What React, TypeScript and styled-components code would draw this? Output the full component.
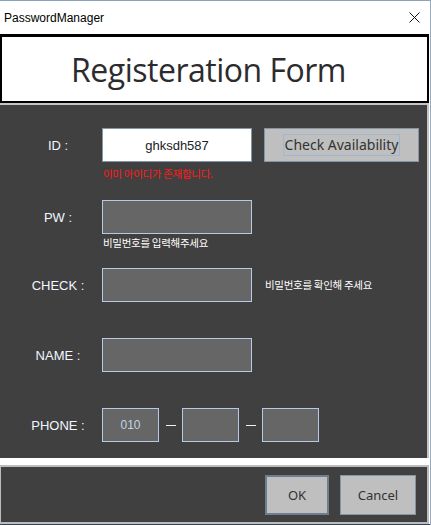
import React from 'react';
import styled, { createGlobalStyle } from 'styled-components';

const GlobalStyle = createGlobalStyle`
  html, body {
    margin: 0;
    padding: 0;
    background: #ffffff;
  }
  * {
    box-sizing: border-box;
  }
`;

const Window = styled.div`
  width: 431px;
  height: 525px;
  display: flex;
  flex-direction: column;
  background: #ffffff;
  border-top: 1px solid #8da3bb;
  border-right: 1px solid #9aaabb;
  overflow: hidden;
  font-family: 'Liberation Sans', Arial, sans-serif;
`;

const TitleBar = styled.div`
  height: 33px;
  flex: none;
  display: flex;
  align-items: center;
  justify-content: space-between;
  padding: 0 10px 0 4px;
  font-family: 'Liberation Sans', Arial, sans-serif;
  font-size: 12px;
  color: #000000;
`;

const CloseIcon = styled.svg`
  width: 11px;
  height: 11px;
`;

const Header = styled.div`
  width: 429px;
  height: 69px;
  flex: none;
  display: flex;
  align-items: center;
  justify-content: center;
  background: #ffffff;
  border-style: solid;
  border-color: #000000;
  border-width: 3px 2px 2px 2px;
  font-family: 'Open Sans', 'Noto Sans', sans-serif;
  font-size: 32px;
  letter-spacing: -0.5px;
  color: #2c2c2e;
  padding-right: 12px;
`;

const MainPanel = styled.div`
  width: 429px;
  height: 355px;
  flex: none;
  display: flex;
  flex-direction: column;
  background: #404040;
  border-top: 2px solid #c4c4c4;
  border-right: 2px solid #c4c4c4;
`;

const Row = styled.div<{ $top: number }>`
  display: flex;
  align-items: center;
  height: 34px;
  margin-top: ${(p) => p.$top}px;
  padding-left: 14px;
`;

const Label = styled.div`
  width: 88px;
  text-align: center;
  color: #f2f6ff;
  font-size: 13px;
`;

const Input = styled.div<{ $light?: boolean; $w?: number }>`
  width: ${(p) => p.$w ?? 150}px;
  height: 34px;
  display: flex;
  align-items: center;
  justify-content: center;
  background: ${(p) => (p.$light ? '#ffffff' : '#666666')};
  border: 1px solid ${(p) => (p.$light ? '#8496a8' : '#b4cbe2')};
  color: ${(p) => (p.$light ? '#222222' : '#c4d4e6')};
  font-size: ${(p) => (p.$light ? 13 : 12)}px;
`;

const Hint = styled.div<{ $error?: boolean; $top: number; $left?: number }>`
  margin-top: ${(p) => p.$top}px;
  margin-left: ${(p) => p.$left ?? 103}px;
  height: 14px;
  line-height: 14px;
  font-family: 'Noto Sans CJK KR', sans-serif;
  font-size: 10.5px;
  letter-spacing: -0.3px;
  color: ${(p) => (p.$error ? '#ff1a1a' : '#ffffff')};
  white-space: nowrap;
`;

const Button = styled.div<{ $w: number; $h: number; $strong?: boolean }>`
  width: ${(p) => p.$w}px;
  height: ${(p) => p.$h}px;
  display: flex;
  align-items: center;
  justify-content: center;
  background: #bfbfbf;
  border: ${(p) => (p.$strong ? '2px solid #6f7e8e' : '1px solid #8495a7')};
  color: #333333;
  font-family: 'Noto Sans', 'Liberation Sans', sans-serif;
  font-size: 13px;
`;

const CheckButton = styled(Button)`
  margin-left: 12px;
  font-size: 14px;
`;

const FocusRect = styled.span`
  border: 1px solid #9fb8d2;
  padding: 0 1px;
  line-height: 20px;
`;

const Dash = styled.div`
  width: 23px;
  display: flex;
  justify-content: center;

  &::before {
    content: '';
    width: 10px;
    height: 1px;
    background: #f0f0f0;
  }
`;

const Gap = styled.div`
  height: 7px;
  flex: none;
  background: #ffffff;
`;

const BottomPanel = styled.div`
  width: 429px;
  height: 59px;
  flex: none;
  display: flex;
  align-items: center;
  justify-content: flex-end;
  gap: 11px;
  padding-right: 11px;
  background: #404040;
  border: 2px solid #bcbcbc;
  border-left-width: 1px;
`;

const BottomEdge = styled.div`
  flex: 1;
  background: #3a4552;
`;

const App: React.FC = () => {
  return (
    <>
      <GlobalStyle />
      <Window>
        <TitleBar>
          <span>PasswordManager</span>
          <CloseIcon viewBox="0 0 11 11">
            <path d="M0.5 0.5 L10.5 10.5 M10.5 0.5 L0.5 10.5" stroke="#111" strokeWidth="1" fill="none" />
          </CloseIcon>
        </TitleBar>
        <Header>Registeration Form</Header>
        <MainPanel>
          <Row $top={23}>
            <Label>ID :</Label>
            <Input $light>ghksdh587</Input>
            <CheckButton $w={155} $h={34}>
              <FocusRect>Check Availability</FocusRect>
            </CheckButton>
          </Row>
          <Hint $error $top={5}>이미 아이디가 존재합니다.</Hint>
          <Row $top={19}>
            <Label>PW :</Label>
            <Input />
          </Row>
          <Hint $top={2}>비밀번호를 입력해주세요</Hint>
          <Row $top={18}>
            <Label>CHECK :</Label>
            <Input />
            <Hint $top={0} $left={13}>비밀번호를 확인해 주세요</Hint>
          </Row>
          <Row $top={36}>
            <Label>NAME :</Label>
            <Input />
          </Row>
          <Row $top={36}>
            <Label>PHONE :</Label>
            <Input $w={57}>010</Input>
            <Dash />
            <Input $w={57} />
            <Dash />
            <Input $w={57} />
          </Row>
        </MainPanel>
        <Gap />
        <BottomPanel>
          <Button $w={64} $h={40} $strong>OK</Button>
          <Button $w={76} $h={40}>Cancel</Button>
        </BottomPanel>
        <BottomEdge />
      </Window>
    </>
  );
};

export default App;
